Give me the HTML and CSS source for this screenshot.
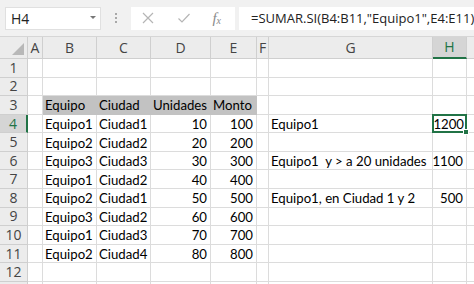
FILE: index.html
```html
<!DOCTYPE html>
<html lang="es">
<head>
  <meta charset="utf-8" />
  <title>SUMAR.SI</title>
  <link rel="stylesheet" href="styles.css">
</head>
<body>
  <div class="formula-bar">
    <div class="name-box">
      <span>H4</span>
      <svg class="caret" width="6" height="4" viewBox="0 0 6 4"><path d="M0 0h6L3 3z" fill="#777"/></svg>
    </div>
    <div class="grip"><i></i><i></i><i></i></div>
    <div class="buttons">
      <svg width="14" height="14" viewBox="0 0 14 14"><path d="M2 2l10 10M12 2L2 12" stroke="#b5b5b5" stroke-width="1.2"/></svg>
      <svg width="14" height="14" viewBox="0 0 14 14"><path d="M1.5 7.5l3.5 3.5 7.5-8" stroke="#b5b5b5" stroke-width="1.2" fill="none"/></svg>
      <span class="fx">f<sub>x</sub></span>
    </div>
    <div class="formula">=SUMAR.SI(B4:B11,"Equipo1",E4:E11)</div>
  </div>

  <div class="sheet">
    <table>
      <tr class="heads">
        <th class="corner"><span class="tri"></span></th>
        <th>A</th><th>B</th><th>C</th><th>D</th><th>E</th><th>F</th><th>G</th><th class="sel-col">H</th><th></th>
      </tr>
      <tr><th>1</th><td></td><td></td><td></td><td></td><td></td><td></td><td></td><td></td><td></td></tr>
      <tr><th>2</th><td></td><td></td><td></td><td></td><td></td><td></td><td></td><td></td><td></td></tr>
      <tr><th>3</th><td></td><td class="hdr">Equipo</td><td class="hdr">Ciudad</td><td class="hdr">Unidades</td><td class="hdr">Monto</td><td></td><td></td><td></td><td></td></tr>
      <tr><th class="sel-row">4</th><td></td><td>Equipo1</td><td>Ciudad1</td><td class="num">10</td><td class="num">100</td><td></td><td>Equipo1</td><td class="num active">1200<span class="handle"></span></td><td></td></tr>
      <tr><th>5</th><td></td><td>Equipo2</td><td>Ciudad2</td><td class="num">20</td><td class="num">200</td><td></td><td></td><td></td><td></td></tr>
      <tr><th>6</th><td></td><td>Equipo3</td><td>Ciudad3</td><td class="num">30</td><td class="num">300</td><td></td><td>Equipo1&nbsp; y &gt; a 20 unidades</td><td class="num">1100</td><td></td></tr>
      <tr><th>7</th><td></td><td>Equipo1</td><td>Ciudad2</td><td class="num">40</td><td class="num">400</td><td></td><td></td><td></td><td></td></tr>
      <tr><th>8</th><td></td><td>Equipo2</td><td>Ciudad1</td><td class="num">50</td><td class="num">500</td><td></td><td>Equipo1, en Ciudad 1 y 2</td><td class="num">500</td><td></td></tr>
      <tr><th>9</th><td></td><td>Equipo3</td><td>Ciudad2</td><td class="num">60</td><td class="num">600</td><td></td><td></td><td></td><td></td></tr>
      <tr><th>10</th><td></td><td>Equipo1</td><td>Ciudad3</td><td class="num">70</td><td class="num">700</td><td></td><td></td><td></td><td></td></tr>
      <tr><th>11</th><td></td><td>Equipo2</td><td>Ciudad4</td><td class="num">80</td><td class="num">800</td><td></td><td></td><td></td><td></td></tr>
      <tr><th>12</th><td></td><td></td><td></td><td></td><td></td><td></td><td></td><td></td><td></td></tr>
      <tr><th></th><td></td><td></td><td></td><td></td><td></td><td></td><td></td><td></td><td></td></tr>
    </table>
  </div>
</body>
</html>
```

FILE: styles.css
```css
* {
  box-sizing: border-box;
}

body {
  margin: 0;
  width: 474px;
  height: 284px;
  overflow: hidden;
  background: #fff;
  font-family: "Open Sans", sans-serif;
}

.formula-bar {
  display: flex;
  align-items: center;
  height: 36px;
  padding: 0 0 0 5px;
  background: #f1f1f1;
}

.name-box {
  display: flex;
  flex-shrink: 0;
  align-items: center;
  justify-content: space-between;
  width: 96px;
  height: 23px;
  padding: 0 4px 0 5px;
  background: #fff;
  border: 1px solid #e0e0e0;
  font-size: 14px;
  color: #222;
}

.grip {
  display: flex;
  flex-shrink: 0;
  flex-direction: column;
  gap: 2px;
  margin: 0 14px 0 14px;
}

.grip i {
  display: block;
  width: 2px;
  height: 2px;
  background: #a8a8a8;
}

.buttons {
  display: flex;
  flex-shrink: 0;
  align-items: center;
  justify-content: space-between;
  width: 104px;
  height: 23px;
  padding: 0 14px 0 10px;
  background: #fff;
}

.fx {
  font-family: "Liberation Serif", serif;
  font-style: italic;
  font-size: 15px;
  color: #8a8a8a;
}

.fx sub {
  font-size: 10px;
  vertical-align: -1px;
}

.formula {
  flex: 1;
  min-width: 0;
  height: 23px;
  margin-left: 4px;
  padding-left: 12px;
  background: #fff;
  font-size: 13px;
  line-height: 23px;
  color: #222;
  white-space: nowrap;
  overflow: hidden;
}

.sheet {
  height: 248px;
  overflow: hidden;
  border-top: 1px solid #d6d6d6;
}

/* the sheet grid: fractional row heights, as in the scaled screenshot */
table {
  display: grid;
  grid-template-columns: 28px 15px 54px 54px 60px 46px 12px 164px 34px 40px;
  grid-template-rows: 22px;
  grid-auto-rows: 18.58px;
  width: 507px;
  font-family: "Lato", sans-serif;
  font-size: 13.2px;
  color: #000;
}

tbody, tr {
  display: contents;
}

th, td {
  display: flex;
  align-items: center;
  min-width: 0;
  padding: 0 2px;
  white-space: nowrap;
  overflow: hidden;
  line-height: 16px;
}

th {
  justify-content: center;
  background: #ececec;
  border-right: 1px solid #cfcfcf;
  border-bottom: 1px solid #cfcfcf;
  font-family: "Open Sans", sans-serif;
  font-weight: normal;
  font-size: 14px;
  color: #444;
}

.corner {
  position: relative;
}

.tri {
  position: absolute;
  right: 3px;
  bottom: 3px;
  width: 0;
  height: 0;
  border-left: 12px solid transparent;
  border-bottom: 12px solid #b8b8b8;
}

th.sel-col {
  background: #d5d5d5;
  color: #217346;
  border-bottom: 2px solid #217346;
}

th.sel-row {
  background: #d5d5d5;
  color: #217346;
  border-right: 2px solid #217346;
}

td {
  border-right: 1px solid #dcdcdc;
  border-bottom: 1px solid #dcdcdc;
  padding-top: 1px;
}

td.hdr {
  background: #c2c2c2;
  border-color: #c2c2c2;
}

td.num {
  justify-content: flex-end;
  padding-right: 3px;
}

td.active {
  position: relative;
  overflow: visible;
  margin: -1px 0 0 -1px;
  border: 2px solid #217346;
  padding-right: 1px;
}

.handle {
  position: absolute;
  right: -4px;
  bottom: -4px;
  width: 6px;
  height: 6px;
  background: #217346;
  border: 1px solid #fff;
}
```
